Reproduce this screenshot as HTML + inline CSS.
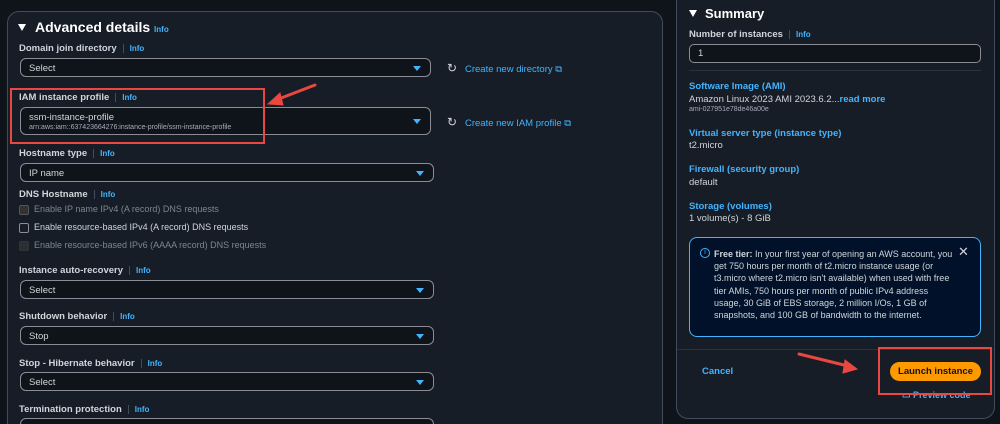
<!DOCTYPE html>
<html style="overflow:hidden;height:424px"><head><style>
html,body{margin:0;padding:0}
body{width:1000px;height:424px;background:#0f141a;font-family:"Liberation Sans",sans-serif;overflow:hidden;color:#d1d5db}
#w{position:relative;width:1000px;height:424px;overflow:hidden}
.a{position:absolute}
.p{position:absolute;border:1px solid #414d5c;border-radius:12px;background:#161d26}
.lb{position:absolute;font-size:9.5px;font-weight:bold;color:#d1d5db;white-space:nowrap}
.lb i{font-style:normal;color:#42b4ff;font-size:8px;border-left:1px solid #414d5c;padding-left:6px;margin-left:6px}
.sel{position:absolute;border:1px solid #8c8c94;border-radius:6px;background:#0f141a;font-size:9.5px;color:#d1d5db;box-sizing:border-box;padding-left:8px;padding-top:1px}
.sel:after{content:"";position:absolute;right:9px;top:50%;margin-top:-2px;border-left:4px solid transparent;border-right:4px solid transparent;border-top:5px solid #42b4ff}
.lk{position:absolute;color:#42b4ff;font-size:9.5px;white-space:nowrap}
.h{position:absolute;color:#42b4ff;font-size:9.5px;font-weight:bold}
.t{position:absolute;font-size:9.5px;color:#d1d5db;white-space:nowrap}
.cb{position:absolute;width:8px;height:8px;border:1px solid #8c8c94;border-radius:2px}
</style></head><body><div id="w">
<div class="p" style="left:7px;top:11px;width:654px;height:430px"></div>
<div class="p" style="left:676px;top:-12px;width:317px;height:429px"></div>

<div class="a" style="left:18px;top:24px;border-left:4.5px solid transparent;border-right:4.5px solid transparent;border-top:7px solid #fff"></div>
<div class="a" style="left:35px;top:19px;font-size:14px;font-weight:bold;color:#fff">Advanced details <span style="font-size:8px;color:#42b4ff">Info</span></div>

<div class="lb" style="left:19px;top:43px">Domain join directory<i>Info</i></div>
<div class="sel" style="left:20px;top:58px;width:411px;height:19px;line-height:17px">Select</div>
<div class="lk" style="left:447px;top:61px"><span style="color:#d1d5db;font-size:12px">↻</span>&nbsp;&nbsp; Create new directory ⧉</div>

<div class="lb" style="left:19px;top:92px">IAM instance profile<i>Info</i></div>
<div class="sel" style="left:20px;top:107px;width:411px;height:28px"><div style="margin-top:3px">ssm-instance-profile</div><div style="font-size:7px;color:#aab;margin-top:1px">arn:aws:iam::637423664276:instance-profile/ssm-instance-profile</div></div>
<div class="lk" style="left:447px;top:115px"><span style="color:#d1d5db;font-size:12px">↻</span>&nbsp;&nbsp; Create new IAM profile ⧉</div>
<div class="a" style="left:10px;top:88px;width:251px;height:52px;border:2px solid #e8483f"></div>

<div class="lb" style="left:19px;top:148px">Hostname type<i>Info</i></div>
<div class="sel" style="left:20px;top:163px;width:414px;height:19px;line-height:17px">IP name</div>
<div class="lb" style="left:19px;top:189px">DNS Hostname<i>Info</i></div>
<div class="cb" style="left:19px;top:205px;border-color:#555;background:#333"></div><div class="t" style="left:34px;top:204px;color:#7d8590;font-size:9px">Enable IP name IPv4 (A record) DNS requests</div>
<div class="cb" style="left:19px;top:223px"></div><div class="t" style="left:34px;top:222px;font-size:9px">Enable resource-based IPv4 (A record) DNS requests</div>
<div class="cb" style="left:19px;top:241px;border-color:#333;background:#2a2f36"></div><div class="t" style="left:34px;top:240px;color:#7d8590;font-size:9px">Enable resource-based IPv6 (AAAA record) DNS requests</div>

<div class="lb" style="left:19px;top:265px">Instance auto-recovery<i>Info</i></div>
<div class="sel" style="left:20px;top:280px;width:414px;height:19px;line-height:17px">Select</div>
<div class="lb" style="left:19px;top:311px">Shutdown behavior<i>Info</i></div>
<div class="sel" style="left:20px;top:326px;width:414px;height:19px;line-height:17px">Stop</div>
<div class="lb" style="left:19px;top:358px">Stop - Hibernate behavior<i>Info</i></div>
<div class="sel" style="left:20px;top:372px;width:414px;height:19px;line-height:17px">Select</div>
<div class="lb" style="left:19px;top:404px">Termination protection<i>Info</i></div>
<div class="sel" style="left:20px;top:418px;width:414px;height:19px"></div>

<div class="a" style="left:689px;top:10px;border-left:4.5px solid transparent;border-right:4.5px solid transparent;border-top:7px solid #fff"></div>
<div class="a" style="left:705px;top:6px;font-size:13px;font-weight:bold;color:#fff">Summary</div>
<div class="lb" style="left:689px;top:29px">Number of instances<i>Info</i></div>
<div class="a" style="left:689px;top:44px;width:292px;height:19px;line-height:18px;border:1px solid #8c8c94;border-radius:5px;box-sizing:border-box;padding-left:8px;font-size:9.5px;background:#0f141a">1</div>
<div class="a" style="left:689px;top:70px;width:292px;border-top:1px solid #2a323d"></div>
<div class="h" style="left:689px;top:81px">Software Image (AMI)</div>
<div class="t" style="left:689px;top:94px">Amazon Linux 2023 AMI 2023.6.2...<b style="color:#42b4ff">read more</b></div>
<div class="t" style="left:689px;top:106px;font-size:7px;color:#aab">ami-027951e78de46a00e</div>
<div class="h" style="left:689px;top:128px">Virtual server type (instance type)</div>
<div class="t" style="left:689px;top:140px">t2.micro</div>
<div class="h" style="left:689px;top:164px">Firewall (security group)</div>
<div class="t" style="left:689px;top:177px">default</div>
<div class="h" style="left:689px;top:201px">Storage (volumes)</div>
<div class="t" style="left:689px;top:213px">1 volume(s) - 8 GiB</div>
<div class="a" style="left:689px;top:237px;width:290px;height:98px;border:1.5px solid #42b4ff;border-radius:8px;background:#001129"></div>
<div class="a" style="left:700px;top:248px;width:8px;height:8px;border:1.2px solid #42b4ff;border-radius:50%;font-size:7px;color:#42b4ff;text-align:center;line-height:8px">i</div>
<div class="a" style="left:714px;top:248px;width:242px;font-size:9px;line-height:12.2px;color:#d1d5db"><b>Free tier:</b> In your first year of opening an AWS account, you get 750 hours per month of t2.micro instance usage (or t3.micro where t2.micro isn't available) when used with free tier AMIs, 750 hours per month of public IPv4 address usage, 30 GiB of EBS storage, 2 million I/Os, 1 GB of snapshots, and 100 GB of bandwidth to the internet.</div>
<div class="a" style="left:958px;top:244px;font-size:13px;color:#d1d5db">✕</div>
<div class="a" style="left:677px;top:349px;width:316px;border-top:1px solid #2a323d"></div>
<div class="h" style="left:702px;top:366px">Cancel</div>
<div class="a" style="left:890px;top:362px;width:91px;height:19px;border-radius:10px;background:#ff9900;color:#0f141a;font-size:9.5px;font-weight:bold;text-align:center;line-height:19px">Launch instance</div>
<div class="a" style="left:902px;top:390px;font-size:9px;color:#42b4ff;font-weight:bold">▭ Preview code</div>
<div class="a" style="left:878px;top:347px;width:114px;height:48px;border:2px solid #e8483f;box-sizing:border-box"></div>

<svg class="a" style="left:0;top:0" width="1000" height="424">
<g stroke="#e8483f" stroke-width="3" stroke-linecap="round" fill="#e8483f">
<line x1="315" y1="85" x2="276" y2="100"/>
<polygon points="268,104 280,93 283,105" stroke-width="1"/>
<line x1="799" y1="354" x2="848" y2="366"/>
<polygon points="857,369 845,360 843,373" stroke-width="1"/>
</g></svg>
</div></body></html>
